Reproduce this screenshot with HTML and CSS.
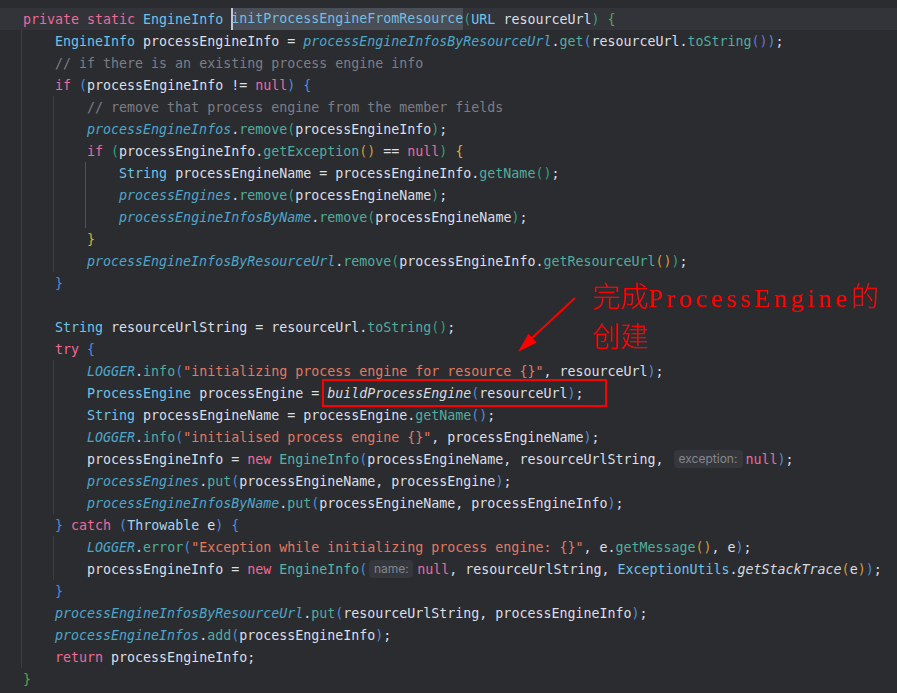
FILE: index.html
```html
<!DOCTYPE html>
<html lang="zh">
<head>
<meta charset="utf-8">
<title>initProcessEngineFromResource</title>
<link rel="stylesheet" href="styles.css">
</head>
<body>
<div class="editor">
<div class="line cur"><span class="k">private static</span> <span class="t">EngineInfo</span> <span class="sel"><span class="d">initProcessEngineFromResource</span></span><span class="bg">(</span><span class="t">URL</span> resourceUrl<span class="bg">)</span> <span class="bgr">{</span></div>
<div class="blk g0">
<div class="line">    <span class="t">EngineInfo</span> processEngineInfo = <span class="f">processEngineInfosByResourceUrl</span>.<span class="m">get</span><span class="bb">(</span>resourceUrl.<span class="m">toString</span><span class="bp">()</span><span class="bb">)</span>;</div>
<div class="line">    <span class="cm">// if there is an existing process engine info</span></div>
<div class="line">    <span class="k">if</span> <span class="bb">(</span>processEngineInfo != <span class="k">null</span><span class="bb">)</span> <span class="bb">{</span></div>
<div class="blk g1">
<div class="line">        <span class="cm">// remove that process engine from the member fields</span></div>
<div class="line">        <span class="f">processEngineInfos</span>.<span class="m">remove</span><span class="bg">(</span>processEngineInfo<span class="bg">)</span>;</div>
<div class="line">        <span class="k">if</span> <span class="bg">(</span>processEngineInfo.<span class="m">getException</span><span class="bo">()</span> == <span class="k">null</span><span class="bg">)</span> <span class="by">{</span></div>
<div class="blk g2">
<div class="line">            <span class="t">String</span> processEngineName = processEngineInfo.<span class="m">getName</span><span class="bg">()</span>;</div>
<div class="line">            <span class="f">processEngines</span>.<span class="m">remove</span><span class="bg">(</span>processEngineName<span class="bg">)</span>;</div>
<div class="line">            <span class="f">processEngineInfosByName</span>.<span class="m">remove</span><span class="bg">(</span>processEngineName<span class="bg">)</span>;</div>
</div>
<div class="line">        <span class="by">}</span></div>
<div class="line">        <span class="f">processEngineInfosByResourceUrl</span>.<span class="m">remove</span><span class="bg">(</span>processEngineInfo.<span class="m">getResourceUrl</span><span class="bo">()</span><span class="bg">)</span>;</div>
</div>
<div class="line">    <span class="bb">}</span></div>
<div class="line"> </div>
<div class="line">    <span class="t">String</span> resourceUrlString = resourceUrl.<span class="m">toString</span><span class="bg">()</span>;</div>
<div class="line">    <span class="k">try</span> <span class="bb">{</span></div>
<div class="blk g1">
<div class="line">        <span class="f">LOGGER</span>.<span class="m">info</span><span class="bb">(</span><span class="s">"initializing process engine for resource {}"</span>, resourceUrl<span class="bb">)</span>;</div>
<div class="line">        <span class="t">ProcessEngine</span> processEngine = <span class="sm">buildProcessEngine</span><span class="bb">(</span>resourceUrl<span class="bb">)</span>;</div>
<div class="line">        <span class="t">String</span> processEngineName = processEngine.<span class="m">getName</span><span class="bb">()</span>;</div>
<div class="line">        <span class="f">LOGGER</span>.<span class="m">info</span><span class="bb">(</span><span class="s">"initialised process engine {}"</span>, processEngineName<span class="bb">)</span>;</div>
<div class="line">        processEngineInfo = <span class="k">new</span> <span class="c">EngineInfo</span><span class="bb">(</span>processEngineName, resourceUrlString, <span class="hint hint-ex">exception:</span><span class="k">null</span><span class="bb">)</span>;</div>
<div class="line">        <span class="f">processEngines</span>.<span class="m">put</span><span class="bb">(</span>processEngineName, processEngine<span class="bb">)</span>;</div>
<div class="line">        <span class="f">processEngineInfosByName</span>.<span class="m">put</span><span class="bb">(</span>processEngineName, processEngineInfo<span class="bb">)</span>;</div>
</div>
<div class="line">    <span class="bb">}</span> <span class="k">catch</span> <span class="bb">(</span><span class="t2">Throwable</span> e<span class="bb">)</span> <span class="bb">{</span></div>
<div class="blk g1">
<div class="line">        <span class="f">LOGGER</span>.<span class="m">error</span><span class="bb">(</span><span class="s">"Exception while initializing process engine: {}"</span>, e.<span class="m">getMessage</span><span class="bo">()</span>, e<span class="bb">)</span>;</div>
<div class="line">        processEngineInfo = <span class="k">new</span> <span class="c">EngineInfo</span><span class="bb">(</span><span class="hint hint-name">name:</span><span class="k">null</span>, resourceUrlString, <span class="t">ExceptionUtils</span>.<span class="sm">getStackTrace</span><span class="bo">(</span>e<span class="bo">)</span><span class="bb">)</span>;</div>
</div>
<div class="line">    <span class="bb">}</span></div>
<div class="line">    <span class="f">processEngineInfosByResourceUrl</span>.<span class="m">put</span><span class="bb">(</span>resourceUrlString, processEngineInfo<span class="bb">)</span>;</div>
<div class="line">    <span class="f">processEngineInfos</span>.<span class="m">add</span><span class="bb">(</span>processEngineInfo<span class="bb">)</span>;</div>
<div class="line">    <span class="k">return</span> processEngineInfo;</div>
</div>
<div class="line"><span class="bgr">}</span></div>

<div class="note-box"></div>
<svg class="note-arrow" width="897" height="693" viewBox="0 0 897 693">
  <line x1="575" y1="298" x2="531" y2="339" stroke="#ff0000" stroke-width="2"/>
  <polygon points="518,352 528.4,333.8 536.6,342.6" fill="#ff0000"/>
</svg>
<div class="note-text"><span class="cjk">完成</span><span class="lat">ProcessEngine</span><span class="cjk">的</span><br><span class="cjk">创建</span></div>
</div>
</body>
</html>
```
FILE: styles.css
```css
html, body {
  margin: 0;
  padding: 0;
  background: #2b2c30;
}

.editor {
  position: relative;
  width: 897px;
  height: 693px;
  padding-top: 8px;
  box-sizing: border-box;
  overflow: hidden;
  background: #2b2c30;
  font-family: "DejaVu Sans Mono", "Liberation Mono", monospace;
  font-size: 13.3px;
  color: #dcdfe4;
}

.line {
  height: 21px;
  padding-top: 1px;
  line-height: 22px;
  padding-left: 23px;
  white-space: pre;
}

.cur {
  background: #323439;
}

.blk.g0 {
  background: linear-gradient(#3c3e44, #3c3e44) no-repeat 21px 0 / 1px 100%;
}
.blk.g1 {
  background: linear-gradient(#3c3e44, #3c3e44) no-repeat 53px 0 / 1px 100%;
}
.blk.g2 {
  background: linear-gradient(#5e5232, #5e5232) no-repeat 85px 0 / 1px 100%;
}

.sel {
  display: inline-block;
  height: 22px;
  line-height: 22px;
  margin-top: -1px;
  vertical-align: top;
  background: #4a4e57;
  box-shadow: inset 2px 0 0 #c4c7cc;
}

.k { color: #ef6a9c; }
.t { color: #6fc3e6; }
.t2 { color: #a8d3ea; }
.d { color: #74bde0; }
.f { color: #4ea6c9; font-style: italic; }
.m { color: #52ac9e; }
.c { color: #56b5a2; }
.sm { color: #d8dade; font-style: italic; }
.s { color: #e17a61; }
.cm { color: #7b7e85; }

.bg { color: #34a07c; }
.bgr { color: #56a64c; }
.bb { color: #4d8ddb; }
.bp { color: #6c70d6; }
.bo { color: #d59b34; }
.by { color: #d9b12e; }

.hint {
  display: inline-block;
  box-sizing: border-box;
  height: 18px;
  line-height: 18px;
  margin: 1px 3px 0 2px;
  vertical-align: top;
  padding: 0 4px;
  border-radius: 4px;
  background: #35373c;
  color: #83868c;
  font-family: Inter, "Noto Sans", sans-serif;
  font-size: 12px;
  text-align: center;
}
.hint-ex { width: 69px; }
.hint-name { width: 44px; margin-right: 4px; }

.note-box {
  position: absolute;
  left: 322px;
  top: 379px;
  width: 285px;
  height: 28px;
  box-sizing: border-box;
  border: 2px solid #ff0000;
}

.note-arrow {
  position: absolute;
  left: 0;
  top: 0;
}

.note-text {
  position: absolute;
  left: 592px;
  top: 279px;
  color: #ff0000;
  line-height: 32px;
  white-space: nowrap;
}

.lat {
  font-family: "Liberation Serif", serif;
  font-size: 26px;
  letter-spacing: 3.8px;
}

.cjk {
  font-family: "Noto Sans CJK SC", sans-serif;
  font-size: 28px;
  font-weight: 300;
}
```
